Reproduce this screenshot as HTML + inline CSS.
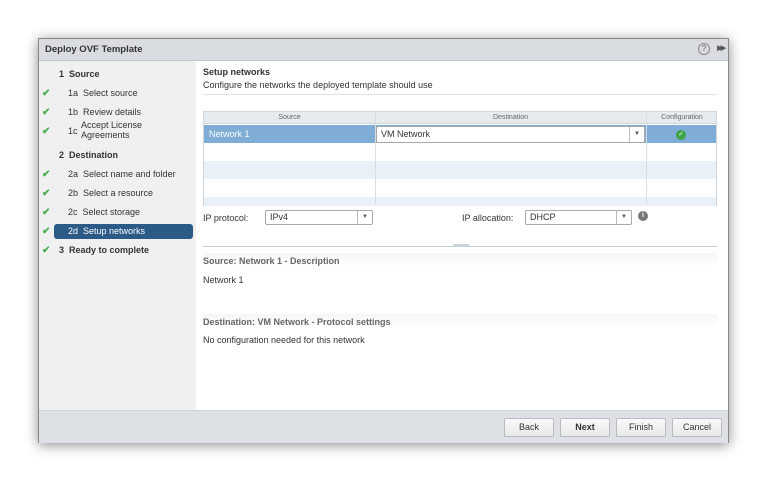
<!DOCTYPE html>
<html><head><style>
*{box-sizing:border-box;margin:0;padding:0}
body{width:768px;height:482px;background:#fff;font-family:"Liberation Sans",Arial,sans-serif;font-size:9px;color:#333;position:relative;overflow:hidden}
.dlg{position:absolute;left:38px;top:38px;width:691px;height:405px;background:#fff;border:1px solid #888;box-shadow:0 2px 12px rgba(0,0,0,.45)}
.title{position:absolute;left:0;top:0;width:100%;height:22px;background:#d9dde1;border-bottom:1px solid #c3c7cb;font-weight:bold;font-size:9.5px;color:#333;padding:5px 6px}
.left{position:absolute;left:0;top:22px;width:157px;height:350px;background:#f0f0f0}
.item{position:absolute;left:0;height:15px;width:157px;font-size:9px;line-height:15px;color:#333}
.ck{position:absolute;left:3px;top:0;color:#4caf50;font-weight:bold;font-size:10px}
.sel{background:#2c5a87;color:#fff;border-radius:3px}
.foot{position:absolute;left:0;top:371px;width:100%;height:33px;background:#dde1e5;border-top:1px solid #cfd3d7}
.btn{position:absolute;top:7px;height:19px;width:50px;border:1px solid #b8bcc0;border-radius:2px;background:linear-gradient(#fafafa,#e8e8e8);text-align:center;line-height:17px;font-size:9px;color:#333}
.abs{position:absolute}
.sel2{position:absolute;height:15px;border:1px solid #a8a8a8;border-radius:2px;background:#fff;font-size:9px;line-height:13px;padding-left:4px}
.sel2 .ar{position:absolute;right:0;top:0;width:15px;height:13px;border-left:1px solid #bbb;text-align:center;font-size:6px;line-height:13px;color:#555}
</style></head><body>
<div class="dlg">
<div class="title">Deploy OVF Template
<span class="abs" style="right:18px;top:4px;width:12px;height:12px;border:1px solid #888;border-radius:50%;font-size:8px;line-height:10px;text-align:center;font-weight:normal;color:#666">?</span>
<span class="abs" style="right:4px;top:5px;font-size:7px;color:#555;letter-spacing:-2px">▶▶</span></div>
<div class="left">
<div class="item" style="top:6px;left:20px;font-weight:bold">1 &nbsp;Source</div>
<div class="item" style="top:25px"><span class="ck">✔</span><span style="margin-left:29px">1a &nbsp;Select source</span></div>
<div class="item" style="top:44px"><span class="ck">✔</span><span style="margin-left:29px">1b &nbsp;Review details</span></div>
<div class="item" style="top:63px"><span class="ck">✔</span><span style="margin-left:29px">1c</span><span class="abs" style="left:42px;top:-4px;line-height:10px">Accept License<br>Agreements</span></div>
<div class="item" style="top:87px;left:20px;font-weight:bold">2 &nbsp;Destination</div>
<div class="item" style="top:106px"><span class="ck">✔</span><span style="margin-left:29px">2a &nbsp;Select name and folder</span></div>
<div class="item" style="top:125px"><span class="ck">✔</span><span style="margin-left:29px">2b &nbsp;Select a resource</span></div>
<div class="item" style="top:144px"><span class="ck">✔</span><span style="margin-left:29px">2c &nbsp;Select storage</span></div>
<div class="item" style="top:163px"><span class="ck">✔</span><span class="abs sel" style="top:0;height:15px;left:15px;width:139px;padding-left:14px">2d &nbsp;Setup networks</span></div>
<div class="item" style="top:182px;font-weight:bold"><span class="ck">✔</span><span style="margin-left:20px">3 &nbsp;Ready to complete</span></div>
</div>
<div class="abs" style="left:164px;top:28px;font-weight:bold">Setup networks</div>
<div class="abs" style="left:164px;top:41px">Configure the networks the deployed template should use</div>
<div class="abs" style="left:164px;top:55px;width:514px;height:1px;background:#e3e3e3"></div>
<div class="abs" style="left:164px;top:72px;width:514px;height:95px;border:1px solid #d0d5da;background:#fff">
 <div class="abs" style="left:0;top:0;width:100%;height:12px;background:#e6ebf0;border-bottom:1px solid #d0d5da;font-size:7px;color:#666;line-height:12px">
  <span class="abs" style="left:0;width:171px;text-align:center">Source</span>
  <span class="abs" style="left:171px;width:271px;text-align:center">Destination</span>
  <span class="abs" style="left:442px;width:72px;text-align:center">Configuration</span></div>
 <div class="abs" style="left:0;top:13px;width:100%;height:18px;background:#7fadd6"></div>
 <div class="abs" style="left:0;top:49px;width:100%;height:18px;background:#e9f0f7"></div>
 <div class="abs" style="left:0;top:85px;width:100%;height:9px;background:#e9f0f7"></div>
 <div class="abs" style="left:171px;top:0;width:1px;height:100%;background:#d8dde2"></div>
 <div class="abs" style="left:442px;top:0;width:1px;height:100%;background:#d8dde2"></div>
 <div class="abs" style="left:5px;top:17px;color:#fff">Network 1</div>
 <div class="sel2" style="left:172px;top:14px;width:269px;height:17px;line-height:15px">VM Network<span class="ar" style="height:15px;line-height:15px">▼</span></div>
 <div class="abs" style="left:472px;top:18px;width:10px;height:10px;border-radius:50%;background:#3aa447;color:#fff;font-size:7px;line-height:10px;text-align:center">✓</div>
</div>
<div class="abs" style="left:164px;top:174px">IP protocol:</div>
<div class="sel2" style="left:226px;top:171px;width:108px">IPv4<span class="ar">▼</span></div>
<div class="abs" style="left:423px;top:174px">IP allocation:</div>
<div class="sel2" style="left:486px;top:171px;width:107px">DHCP<span class="ar">▼</span></div>
<div class="abs" style="left:599px;top:172px;width:10px;height:10px;border-radius:50%;background:#777;color:#fff;font-size:7px;font-weight:bold;line-height:10px;text-align:center">i</div>
<div class="abs" style="left:164px;top:207px;width:514px;height:1px;background:#c8d2dc"></div>
<div class="abs" style="left:414px;top:205px;width:16px;height:3px;background:#c8d2dc"></div>
<div class="abs" style="left:164px;top:214px;width:514px;height:14px;background:linear-gradient(#f6f6f6,#fff);font-weight:bold;color:#666;padding:3px 0 0 0">Source: Network 1 - Description</div>
<div class="abs" style="left:164px;top:236px">Network 1</div>
<div class="abs" style="left:164px;top:275px;width:514px;height:14px;background:linear-gradient(#f6f6f6,#fff);font-weight:bold;color:#666;padding:3px 0 0 0">Destination: VM Network - Protocol settings</div>
<div class="abs" style="left:164px;top:296px">No configuration needed for this network</div>
<div class="foot">
<div class="btn" style="left:465px">Back</div>
<div class="btn" style="left:521px;font-weight:bold">Next</div>
<div class="btn" style="left:577px">Finish</div>
<div class="btn" style="left:633px">Cancel</div>
</div>
</div>
</body></html>
